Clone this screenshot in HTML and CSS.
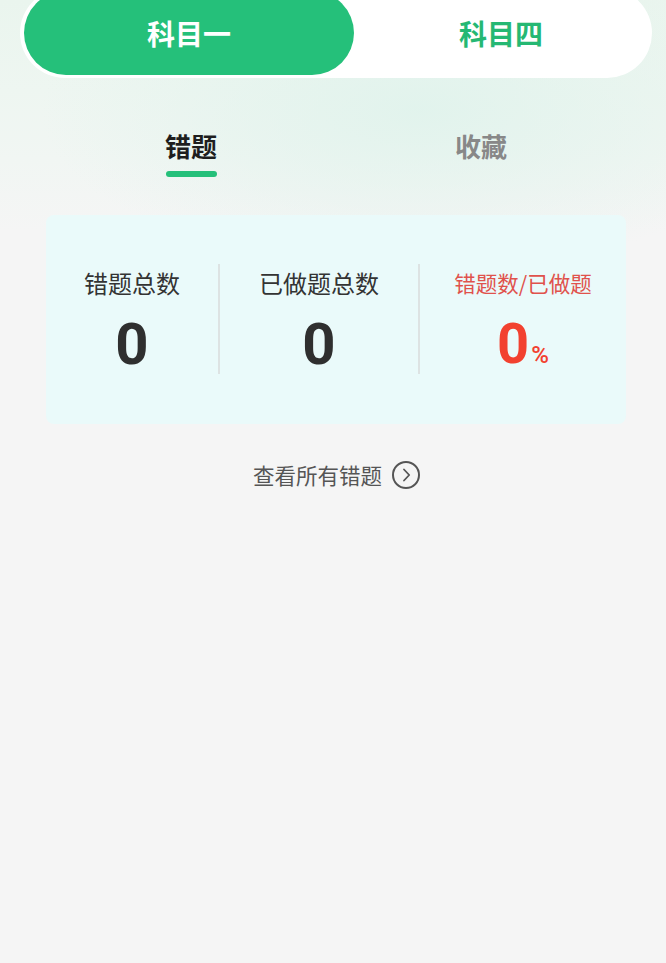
FILE: index.html
```html
<!DOCTYPE html>
<html lang="zh-CN">
<head>
<meta charset="utf-8">
<title>错题</title>
<link rel="stylesheet" href="styles.css">
</head>
<body>
<div class="page">
  <div class="segment">
    <div class="seg-item active">科目一</div>
    <div class="seg-item">科目四</div>
  </div>

  <div class="content">
    <div class="tabs">
      <div class="tab active"><span class="tab-label">错题</span><span class="tab-bar"></span></div>
      <div class="tab"><span class="tab-label">收藏</span></div>
    </div>

    <div class="card">
      <div class="stat stat-wrong">
        <div class="stat-label">错题总数</div>
        <div class="stat-num">0</div>
      </div>
      <div class="stat stat-done divided">
        <div class="stat-label">已做题总数</div>
        <div class="stat-num">0</div>
      </div>
      <div class="stat stat-rate divided">
        <div class="stat-label red">错题数/已做题</div>
        <div class="stat-num red">0<span class="pct">%</span></div>
      </div>
    </div>

    <div class="link">
      <span>查看所有错题</span>
      <span class="circle">
        <svg width="16" height="16" viewBox="0 0 16 16"><path d="M6 2.5 L11.2 8 L6 13.5" fill="none" stroke="#555" stroke-width="1.8" stroke-linecap="round" stroke-linejoin="round"/></svg>
      </span>
    </div>
  </div>
</div>
</body>
</html>
```

FILE: styles.css
```css
html, body {
  margin: 0;
  padding: 0;
}
body {
  width: 666px;
  min-height: 963px;
  background: #f5f5f5;
  font-family: "Noto Sans CJK SC", "Noto Sans", sans-serif;
  overflow: hidden;
}
.page {
  min-height: 963px;
  background:
    radial-gradient(ellipse 380px 160px at 420px 110px, rgba(224, 243, 236, 0.9), rgba(224, 243, 236, 0) 100%),
    linear-gradient(180deg, #eaf5ee 0px, #eef6f1 90px, #f1f6f3 160px, #f5f5f5 230px);
  overflow: hidden;
}
.segment {
  margin: -12px 14px 0 20px;
  height: 90px;
  box-sizing: border-box;
  padding: 3px 4px;
  background: #ffffff;
  border-radius: 45px;
  display: flex;
}
.seg-item {
  flex: 1;
  display: flex;
  align-items: center;
  justify-content: center;
  border-radius: 42px;
  font-size: 28px;
  font-weight: 700;
  color: #25b873;
}
.seg-item.active {
  flex: 0 0 330px;
  background: #25c07a;
  color: #ffffff;
}
.content {
  padding: 0 40px 0 46px;
}
.tabs {
  display: flex;
  margin-top: 53px;
}
.tab {
  flex: 1;
  display: flex;
  flex-direction: column;
  align-items: center;
}
.tab-label {
  font-size: 26px;
  line-height: 30px;
  font-weight: 700;
  color: #888888;
}
.tab.active .tab-label {
  color: #1e1e1e;
}
.tab-bar {
  width: 51px;
  height: 6px;
  border-radius: 3px;
  background: #25c07a;
  margin-top: 10px;
}
.card {
  margin-top: 38px;
  background: #eafafa;
  border-radius: 8px;
  padding: 49px 0 50px;
  display: flex;
}
.stat {
  display: flex;
  flex-direction: column;
  align-items: center;
  padding-top: 4px;
  height: 106px;
}
.stat-wrong {
  flex: 0 0 172px;
}
.stat-done {
  flex: 0 0 198px;
}
.stat-rate {
  flex: 1 1 auto;
}
.stat.divided {
  border-left: 2px solid #dde3e3;
}
.stat-label {
  font-size: 24px;
  line-height: 30px;
  color: #333333;
  white-space: nowrap;
}
.stat-label.red {
  font-size: 21.5px;
  color: #e0524c;
}
.stat-num {
  margin-top: 17px;
  font-family: Roboto, "Liberation Sans", sans-serif;
  font-weight: 700;
  font-size: 58px;
  line-height: 58px;
  color: #2f2f2f;
}
.stat-num.red {
  color: #f2412f;
  font-size: 56px;
}
.pct {
  font-size: 24px;
  font-weight: 500;
  margin-left: 2px;
}
.link {
  margin-top: 36px;
  display: flex;
  align-items: center;
  justify-content: center;
  gap: 10px;
  padding-left: 1px;
  font-size: 21.5px;
  line-height: 30px;
  color: #555555;
}
.circle {
  width: 28px;
  height: 28px;
  box-sizing: border-box;
  border: 2px solid #555555;
  border-radius: 50%;
  display: flex;
  align-items: center;
  justify-content: center;
}
```
